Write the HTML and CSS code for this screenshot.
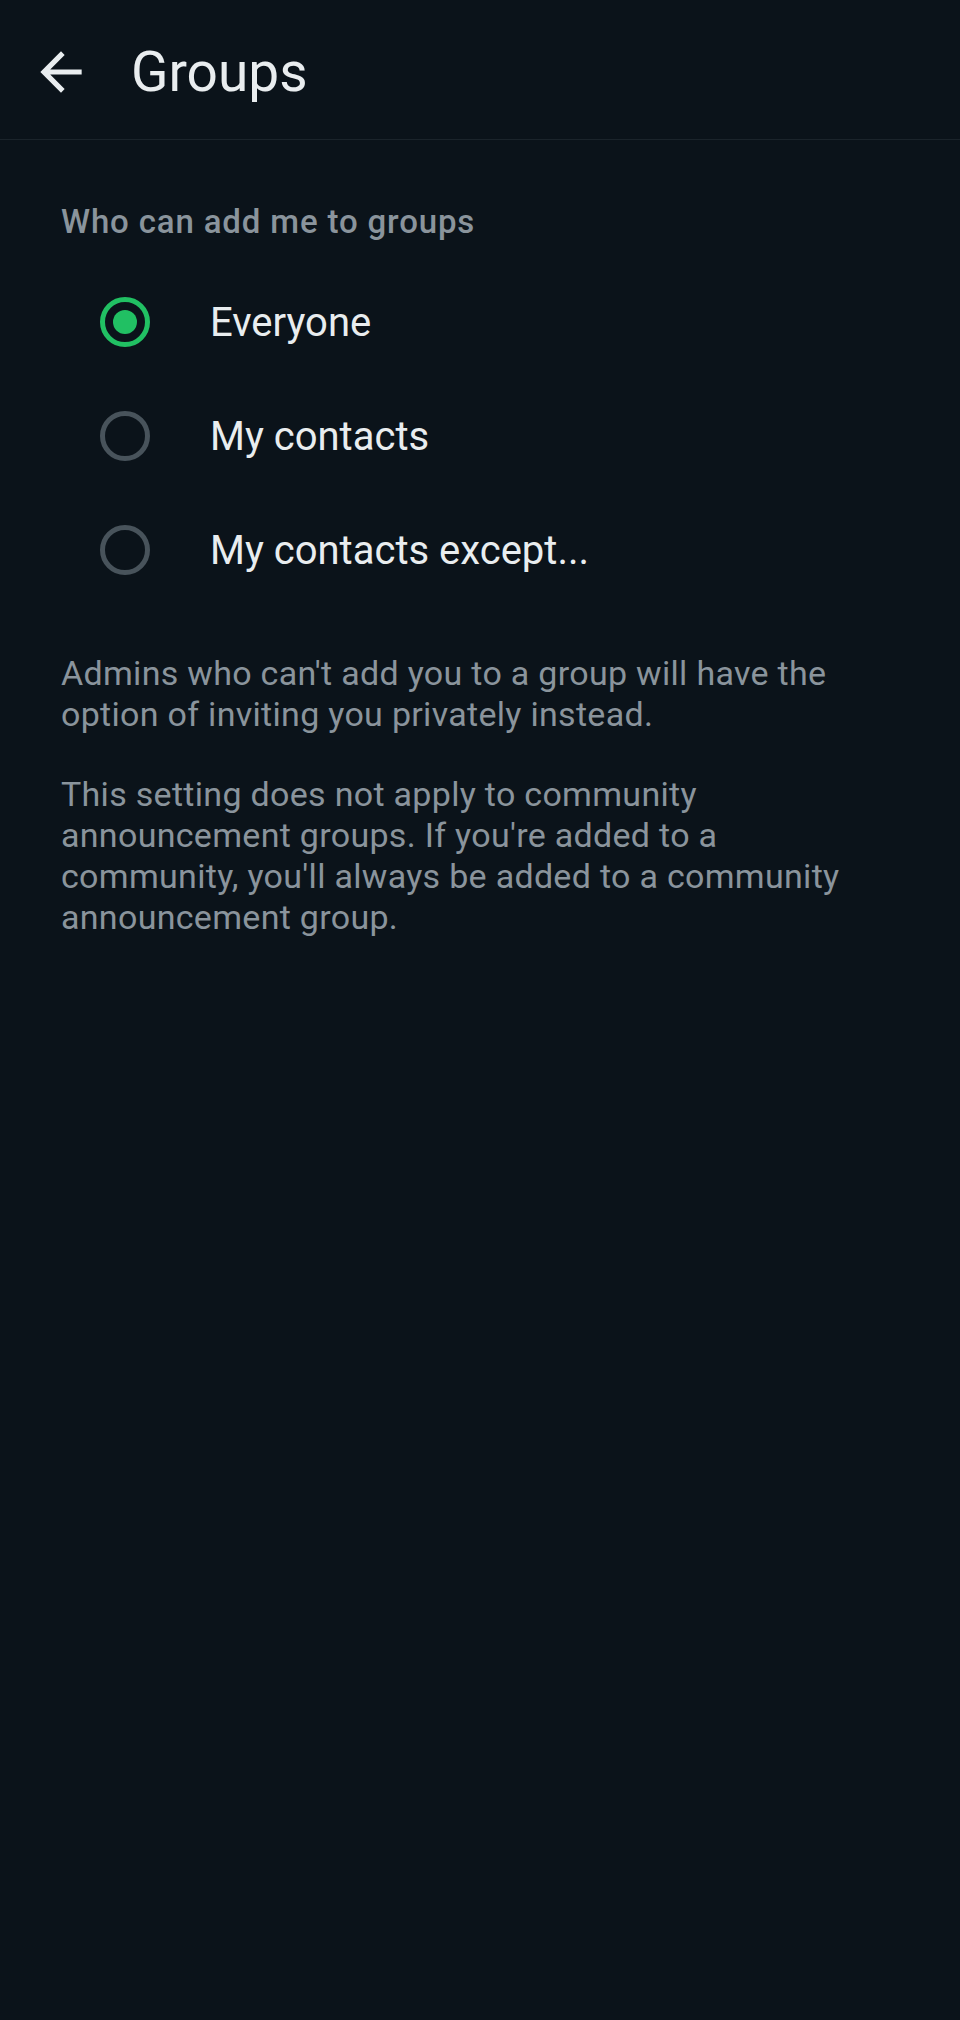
FILE: index.html
```html
<!DOCTYPE html>
<html lang="en">
<head>
  <meta charset="UTF-8" />
  <meta name="viewport" content="width=device-width, initial-scale=1.0" />
  <title>Groups</title>
  <link rel="stylesheet" href="styles.css">
</head>
<body>
  <header class="topbar">
    <button class="back-button" aria-label="Back">
      <svg viewBox="0 0 24 24" width="62" height="62">
        <path d="M20 11H7.83l5.59-5.59L12 4l-8 8 8 8 1.41-1.41L7.83 13H20v-2z" fill="currentColor"/>
      </svg>
    </button>
    <h1>Groups</h1>
  </header>

  <main class="settings">
    <h2 class="section-title">Who can add me to groups</h2>

    <ul class="options">
      <li class="option selected">
        <span class="radio"></span>
        <span class="label">Everyone</span>
      </li>
      <li class="option">
        <span class="radio"></span>
        <span class="label">My contacts</span>
      </li>
      <li class="option">
        <span class="radio"></span>
        <span class="label">My contacts except...</span>
      </li>
    </ul>

    <p class="note first">Admins who can't add you to a group will have the option of inviting you privately instead.</p>
    <p class="note">This setting does not apply to community announcement groups. If you're added to a community, you'll always be added to a community announcement group.</p>
  </main>
</body>
</html>
```

FILE: styles.css
```css
body {
  background-color: #0b131a;
  color: #e9edef;
  font-family: Roboto, 'Noto Sans', sans-serif;
  margin: 0;
  padding: 0;
  min-height: 2020px;
}

.topbar {
  display: flex;
  align-items: center;
  box-sizing: border-box;
  height: 140px;
  padding: 4px 0 0 30px;
  border-bottom: 1px solid #1b242b;
}

.back-button {
  background: none;
  border: none;
  padding: 0;
  color: #e9edef;
  display: flex;
  width: 62px;
  height: 62px;
  cursor: pointer;
}

.topbar h1 {
  margin: 0 0 0 39px;
  font-size: 55px;
  font-weight: 400;
  color: #e9edef;
}

.settings {
  padding: 0 61px;
}

.section-title {
  margin: 62px 0 23px;
  font-size: 33px;
  letter-spacing: 0.85px;
  line-height: 40px;
  font-weight: 500;
  color: #8a949c;
}

.options {
  list-style: none;
  margin: 0;
  padding: 0;
}

.option {
  display: flex;
  align-items: center;
  height: 114px;
  padding-left: 39px;
}

.radio {
  width: 50px;
  height: 50px;
  box-sizing: border-box;
  border: 5px solid #48535b;
  border-radius: 50%;
  display: flex;
  align-items: center;
  justify-content: center;
  flex-shrink: 0;
}

.option.selected .radio {
  border-color: #21c063;
}

.option.selected .radio::after {
  content: '';
  width: 24px;
  height: 24px;
  border-radius: 50%;
  background-color: #21c063;
}

.label {
  margin-left: 60px;
  font-size: 40px;
  color: #e9edef;
}

.note {
  max-width: 800px;
  margin: 39px 0 0;
  font-size: 34px;
  letter-spacing: 0.3px;
  line-height: 41px;
  color: #8a949c;
}

.note.first {
  margin-top: 46px;
}
```
